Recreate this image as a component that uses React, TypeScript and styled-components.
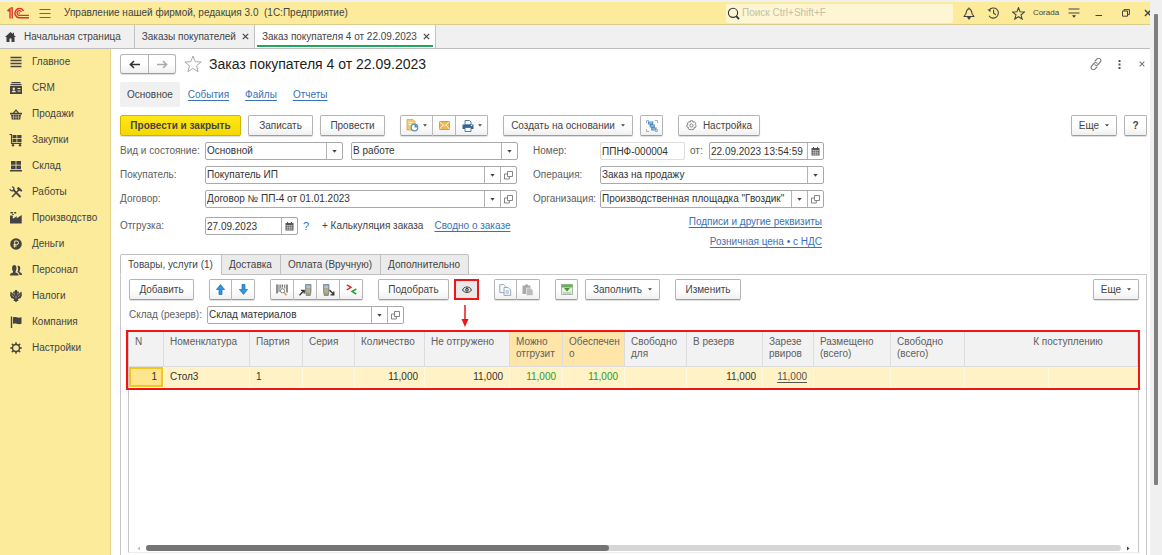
import React from 'react';
import styled, { createGlobalStyle, css } from 'styled-components';

const line = '#b4b4b4';
const ink = '#444444';
const blue = '#3a72b8';
const red = '#f01414';

const GlobalStyle = createGlobalStyle`
  * { box-sizing: border-box; }
  body { margin: 0; background: #ffffff; }
  body, button, input, select, table {
    font-family: 'Liberation Sans', Arial, sans-serif;
    font-size: 10px;
    line-height: 12px;
    color: ${ink};
  }
  button { padding: 0; margin: 0; cursor: pointer; }
  svg { display: block; flex: none; }
`;

/* ---------- page frame ---------- */

const Page = styled.div`
  display: flex;
  min-height: 100vh;
  background: #f0f0f0;
`;
const Window = styled.div`
  flex: 1;
  min-width: 0;
  display: flex;
  flex-direction: column;
  padding-top: 2px;
`;
const PageScroll = styled.div`
  width: 12px;
  flex: none;
  display: flex;
  justify-content: center;
  align-items: flex-start;
  padding: 14px 0 0 0;
  height: 100vh;
`;
const PageThumb = styled.div`
  width: 4px;
  height: 87%;
  background: #808080;
  border-radius: 1px;
`;
const TitleBar = styled.header`
  height: 23px;
  display: flex;
  align-items: center;
  padding-left: 7px;
  background: #fbeb9b;
  border-bottom: 1px solid #d9cc8c;
  overflow: hidden;
`;
const AppName = styled.div`
  flex: 1;
  white-space: pre;
  margin-left: 3px;
`;
const PlainButton = styled.button<{ $w?: number }>`
  width: ${(p) => p.$w ?? 25}px;
  height: 20px;
  flex: none;
  border: 0;
  background: transparent;
  display: flex;
  align-items: center;
  justify-content: center;
`;
const WindowClose = styled(PlainButton)`
  width: 16px;
  margin-right: -6px;
`;
const Search = styled.label`
  width: 227px;
  height: 19px;
  margin-right: 3px;
  padding-left: 1px;
  display: flex;
  align-items: center;
  gap: 2px;
  background: #fef6d3;
  border-radius: 2px;
`;
const SearchInput = styled.input`
  flex: 1;
  min-width: 0;
  border: 0;
  padding: 0;
  background: transparent;
  outline: none;
  &::placeholder { color: #c4bfa6; opacity: 1; }
`;
const UserName = styled.span`
  font-size: 8px;
  width: 30px;
  text-align: center;
`;

const WindowTabs = styled.nav`
  height: 24px;
  display: flex;
  background: #f0f0f0;
  border-bottom: 1px solid #bdbdbd;
`;
const WindowTab = styled.div<{ $active?: boolean; $pad: number }>`
  display: flex;
  align-items: center;
  gap: 6px;
  padding: 0 ${(p) => p.$pad}px 0 7px;
  border-right: 1px solid #c2c2c2;
  background: ${(p) => (p.$active ? '#ffffff' : 'transparent')};
  box-shadow: ${(p) =>
    p.$active ? 'inset 2px 0 #fff, inset -2px 0 #fff, inset 0 -1px #fff, inset 0 -3px #21a65b' : 'none'};
`;
const HomeTab = styled(WindowTab)`
  padding-left: 5px;
`;
const TabLink = styled.a`
  color: ${ink};
  text-decoration: none;
  white-space: nowrap;
  display: flex;
  align-items: center;
  gap: 8px;
`;
const TabClose = styled.button`
  border: 0;
  background: transparent;
  width: 8px;
  height: 12px;
  display: flex;
  align-items: center;
`;

const Body = styled.div`
  flex: 1;
  display: flex;
`;
const Sidebar = styled.nav`
  width: 111px;
  flex: none;
  background: #fbeb9b;
  border-right: 1px solid #e3d48c;
`;
const SideLink = styled.a`
  display: flex;
  align-items: center;
  gap: 9px;
  height: 26px;
  padding-left: 9px;
  color: ${ink};
  text-decoration: none;
`;
const Main = styled.main`
  flex: 1;
  min-width: 0;
  display: flex;
  flex-direction: column;
  background: #ffffff;
  padding: 5px 3px 0 9px;
`;

/* ---------- controls ---------- */

const Row = styled.div<{ $gap?: number }>`
  display: flex;
  align-items: center;
  gap: ${(p) => p.$gap ?? 7}px;
`;
const Spacer = styled.div`
  flex: 1;
`;
const buttonFace = css`
  border: 1px solid ${line};
  border-bottom-color: #9c9c9c;
  background: linear-gradient(#ffffff 50%, #f0f0f0);
`;
const Button = styled.button<{ $primary?: boolean; $w: number }>`
  ${buttonFace}
  height: 21px;
  flex: none;
  display: flex;
  align-items: center;
  justify-content: center;
  gap: 6px;
  width: ${(p) => p.$w}px;
  border-radius: 2px;
  white-space: nowrap;
  box-shadow: 0 1px 1px #dddddd;
  ${(p) =>
    p.$primary &&
    css`
      background: linear-gradient(#ffe818, #f5d800);
      border-color: #cfb300;
      font-weight: bold;
    `}
`;
const IconButton = styled(Button)`
  gap: 4px;
`;
const Group = styled.div`
  display: flex;
  margin-left: 8px;
  & > button { border-radius: 0; }
  & > button:first-child { border-radius: 2px 0 0 2px; }
  & > button:last-child { border-radius: 0 2px 2px 0; }
  & > button:only-child { border-radius: 2px; }
  & > button + button { border-left: 0; }
`;
const EyeButton = styled.button`
  position: relative;
  width: 25px;
  height: 21px;
  display: flex;
  align-items: center;
  justify-content: center;
  border: 2px solid ${red};
  background: #e8e8e8;
  margin-left: -2px;
`;
const Pointer = styled.svg`
  position: absolute;
  top: 23px;
  left: 5px;
`;

const History = styled.div`
  display: flex;
  height: 20px;
  ${buttonFace}
  border-radius: 3px;
  box-shadow: 0 1px 1px #dddddd;
  & > button + button { border-left: 1px solid ${line}; }
  & > button { height: 18px; }
`;
const PageTitle = styled.h1`
  margin: 0;
  font-size: 14px;
  line-height: 18px;
  font-weight: normal;
  color: #1c1c1c;
  flex: 1;
`;
const SectionNav = styled.nav`
  display: flex;
  align-items: center;
  gap: 16px;
  height: 25px;
  margin: 8px 0;
`;
const SectionCurrent = styled.span`
  height: 25px;
  line-height: 25px;
  padding: 0 7px;
  margin-right: -8px;
  background: #f0f0f0;
  border-radius: 2px;
`;
const Link = styled.a`
  color: ${blue};
  text-decoration: underline;
  text-underline-offset: 2px;
  white-space: nowrap;
`;

/* ---------- form ---------- */

const Form = styled.form`
  display: flex;
  gap: 16px;
  margin-top: 6px;
`;
const FormColumn = styled.div<{ $w: number }>`
  width: ${(p) => p.$w}px;
  flex: none;
  display: flex;
  flex-direction: column;
  gap: 6px;
`;
const ShipRow = styled(Row)`
  margin-top: 3px;
`;
const Label = styled.label<{ $w?: number }>`
  width: ${(p) => (p.$w ? p.$w + 'px' : 'auto')};
  flex: none;
  white-space: nowrap;
  color: #606060;
`;
const Box = styled.div<{ $w?: number; $pale?: boolean }>`
  height: 18px;
  display: flex;
  flex: ${(p) => (p.$w ? 'none' : '1')};
  width: ${(p) => (p.$w ? p.$w + 'px' : 'auto')};
  min-width: 0;
  border: 1px solid ${(p) => (p.$pale ? '#dedede' : '#a9a9a9')};
  border-radius: 2px;
  background: #ffffff;
`;
const fieldText = css`
  flex: 1;
  min-width: 0;
  width: 100%;
  height: 16px;
  padding: 0 1px;
  border: 0;
  background: transparent;
  outline: none;
  color: #333333;
`;
const TextInput = styled.input`
  ${fieldText}
`;
const SelectWrap = styled.div`
  position: relative;
  flex: 1;
  min-width: 0;
  display: flex;
`;
const Select = styled.select`
  ${fieldText}
  appearance: none;
  padding-right: 16px;
`;
const Drop = styled.span`
  position: absolute;
  top: 0;
  right: 0;
  width: 16px;
  height: 16px;
  display: flex;
  align-items: center;
  justify-content: center;
  border-left: 1px solid ${line};
  pointer-events: none;
`;
const CellButton = styled.button`
  width: 16px;
  height: 16px;
  flex: none;
  border: 0;
  border-left: 1px solid ${line};
  background: transparent;
  display: flex;
  align-items: center;
  justify-content: center;
`;
const HelpButton = styled.button`
  border: 0;
  background: transparent;
  color: #1d74c8;
  font-size: 11px;
  width: 10px;
`;
const CalcButton = styled.button`
  border: 0;
  background: transparent;
  margin: 0 8px;
`;
const Links = styled.div`
  display: flex;
  flex-direction: column;
  align-items: flex-end;
  gap: 8px;
  margin-top: 2px;
  padding-right: 2px;
`;

/* ---------- goods panel ---------- */

const Tabs = styled.div`
  display: flex;
  margin-top: 6px;
  height: 21px;
  position: relative;
  z-index: 1;
  margin-bottom: -1px;
`;
const Tab = styled.button<{ $active?: boolean }>`
  border: 1px solid #c0c0c0;
  border-left-width: ${(p) => (p.$active ? '1px' : '0')};
  border-bottom-color: ${(p) => (p.$active ? '#ffffff' : '#c0c0c0')};
  background: ${(p) => (p.$active ? '#ffffff' : '#ebebeb')};
  padding: 0 8px 0 7px;
  height: 21px;
  white-space: nowrap;
  &:first-child { border-top-left-radius: 2px; }
  &:last-child { border-top-right-radius: 2px; }
`;
const Panel = styled.section`
  flex: 1;
  display: flex;
  flex-direction: column;
  border: 1px solid #c8c8c8;
  border-bottom: 0;
  padding: 4px 7px 2px;
`;
const PanelRow = styled(Row)`
  padding-left: 1px;
`;
const WarehouseRow = styled.div`
  display: flex;
  align-items: center;
  margin-top: 6px;
  padding-left: 1px;
`;
const TableFrame = styled.div`
  position: relative;
  flex: 1;
  margin-top: 7px;
  border: 1px solid #c8c8c8;
  border-bottom-color: #eeeeee;
  display: flex;
  flex-direction: column;
  justify-content: space-between;
`;
const Highlight = styled.div`
  position: relative;
  &::after {
    content: '';
    position: absolute;
    inset: -2px -2px -3px -3px;
    border: 2px solid ${red};
    pointer-events: none;
  }
`;
const Table = styled.table`
  width: 100%;
  table-layout: fixed;
  border-collapse: separate;
  border-spacing: 0;
`;
const Th = styled.th<{ $hot?: boolean; $center?: boolean; $pad?: number }>`
  height: 35px;
  padding: 4px 0 0 ${(p) => p.$pad ?? 6}px;
  vertical-align: top;
  text-align: ${(p) => (p.$center ? 'center' : 'left')};
  font-weight: normal;
  color: #606060;
  background: ${(p) => (p.$hot ? '#ffe6a8' : '#f2f2f2')};
  border-right: 1px solid #dcdcdc;
  border-bottom: 1px solid #dcdcdc;
  overflow: hidden;
  white-space: pre;
`;
const Td = styled.td<{ $right?: boolean; $green?: boolean; $current?: boolean }>`
  height: 20px;
  padding: 0 6px;
  text-align: ${(p) => (p.$right ? 'right' : 'left')};
  color: ${(p) => (p.$green ? '#2c9a2c' : '#333333')};
  background: ${(p) => (p.$current ? '#ffe58c' : '#fff2c6')};
  border-right: 1px solid #fff9e2;
  box-shadow: ${(p) => (p.$current ? 'inset 0 0 0 2px #f5c521' : 'none')};
`;
const CellLink = styled.a`
  color: #555555;
  text-underline-offset: 2px;
`;
const HScroll = styled.div`
  display: flex;
  align-items: center;
  gap: 5px;
  padding: 0 7px 1px;
`;
const HTrack = styled.div`
  flex: 1;
  height: 6px;
  border-radius: 3px;
  background: #d6d6d6;
`;
const HThumb = styled.div`
  width: 47.5%;
  height: 6px;
  border-radius: 3px;
  background: #757575;
`;

/* ---------- icons ---------- */

const Caret = () => (
  <svg width="5" height="3" viewBox="0 0 5 3">
    <path d="M0.3 0h4.4L2.5 2.8z" fill="#444" />
  </svg>
);
const CaretSmall = () => (
  <svg width="4" height="3" viewBox="0 0 4 3">
    <path d="M0 0.3h4L2 2.6z" fill="#444" />
  </svg>
);
const Cross = ({ size = 7, color = '#444' }: { size?: number; color?: string }) => (
  <svg width={size} height={size} viewBox="0 0 7 7">
    <path d="M0.8 0.8l5.4 5.4M6.2 0.8L0.8 6.2" stroke={color} strokeWidth="1.2" />
  </svg>
);
const OpenIcon = () => (
  <svg width="9" height="9" viewBox="0 0 9 9" fill="none" stroke="#777" strokeWidth="0.9">
    <path d="M3.5 0.5h5v5h-5zM3.3 3H0.5v5h4.8V5.8" />
  </svg>
);
const CalendarIcon = () => (
  <svg width="9" height="9" viewBox="0 0 9 9">
    <path d="M0.5 1h8v7.5h-8z" fill="#555" />
    <path d="M2.5 0v1.5M6.5 0v1.5" stroke="#555" />
    <path d="M1 3.5h7M1 5.3h7M1 7.1h7" stroke="#fff" strokeWidth="0.4" />
    <path d="M2.7 3.2v5M4.5 3.2v5M6.3 3.2v5" stroke="#fff" strokeWidth="0.4" />
  </svg>
);
const Logo = () => (
  <svg width="22" height="12" viewBox="0 0 22 12" fill="none" stroke="#d8352c">
    <path d="M0.4 4L3.4 1.4M3 11.5V3.2L1.6 4.6M5.2 11.5V0.9H3.6" strokeWidth="1.4" />
    <path d="M16.6 4A4.6 4.6 0 1 0 12.1 10.7H22" strokeWidth="1.4" />
    <path d="M14.5 4.8A2.4 2.4 0 1 0 12.1 8.4H22" strokeWidth="1.3" />
    <circle cx="12.2" cy="6" r="0.6" fill="#d8352c" strokeWidth="0.4" />
  </svg>
);
const Burger = () => (
  <svg width="12" height="11" viewBox="0 0 12 11" stroke="#666" strokeWidth="1.2">
    <path d="M0.5 1.5h11M0.5 5.5h11M0.5 9.5h11" />
  </svg>
);
const SearchIcon = () => (
  <svg width="13" height="13" viewBox="0 0 13 13" fill="none" stroke="#333">
    <circle cx="6" cy="5.8" r="4.6" strokeWidth="1.1" />
    <path d="M9.3 9.2l2.7 2.9" strokeWidth="1.8" />
  </svg>
);
const Bell = () => (
  <svg width="12" height="13" viewBox="0 0 12 13" fill="none" stroke="#444" strokeWidth="1.1">
    <path d="M1 9.5h10L9.4 7.3C8.6 6 9 2 6 1.8 3 2 3.4 6 2.6 7.3z" strokeLinejoin="round" />
    <path d="M4.8 10.3h2.4L6 12z" fill="#444" />
    <path d="M6 0.6v1.2" />
  </svg>
);
const ClockBack = () => (
  <svg width="13" height="12" viewBox="0 0 13 12" fill="none" stroke="#444" strokeWidth="1.1">
    <path d="M2 3.3A5.1 5.1 0 1 1 2 8.8M6.6 2.8v3.5l2.3 1.5" />
    <path d="M0.3 2.5h3.2v2.8z" fill="#444" stroke="none" />
  </svg>
);
const Star = ({ size, color, weight = 1 }: { size: number; color: string; weight?: number }) => (
  <svg width={size} height={size} viewBox="0 0 18 18" fill="none" stroke={color} strokeWidth={weight}>
    <path d="M9 1l2.2 5.7 6 .3-4.7 3.8 1.6 5.9L9 13.4l-5.100 3.300 1.600-5.900L0.800 7l6-.3z" />
  </svg>
);
const MenuLines = () => (
  <svg width="12" height="10" viewBox="0 0 12 10">
    <path d="M0.5 1h11M0.5 5h11" stroke="#444" strokeWidth="1.1" />
    <path d="M4 7.2h4L6 9.8z" fill="#333" />
  </svg>
);
const Restore = () => (
  <svg width="8" height="8" viewBox="0 0 8 8" fill="none" stroke="#444">
    <path d="M0.5 2h5v5.2h-5zM2 2V0.6h5.4v5H5.5" />
  </svg>
);
const Minimize = () => (
  <svg width="8" height="8" viewBox="0 0 8 8" stroke="#444">
    <path d="M0.500 6.500h6.500" />
  </svg>
);
const Home = () => (
  <svg width="11" height="10" viewBox="0 0 11 10" fill="#3c3c3c">
    <path d="M5.5 0L0 5h1.5v5h3V6.5h2V10h3V5H11L9 3.2V0.8H7.8v1.3z" />
  </svg>
);
const Arrow = ({ color, flip }: { color: string; flip?: boolean }) => (
  <svg width="11" height="9" viewBox="0 0 11 9" fill="none" stroke={color} strokeWidth="1.600">
    <path d={flip ? 'M0 4.5h9.5M6 1l3.6 3.5L6 8' : 'M11 4.5H1.5M5 1L1.4 4.5 5 8'} />
  </svg>
);
const ChainLink = () => (
  <svg width="12" height="12" viewBox="0 0 12 12" fill="none" stroke="#777" strokeWidth="1.1" strokeLinecap="round">
    <path d="M5 3l1.700-1.700a2.200 2.200 0 0 1 3.800 2.400L8 6.600a2.200 2.200 0 0 1-3 .3" />
    <path d="M7 9l-1.700 1.700a2.200 2.200 0 0 1-3.800-2.400L4 5.400a2.200 2.200 0 0 1 3-.3" />
  </svg>
);
const Dots = () => (
  <svg width="3" height="9" viewBox="0 0 3 9" fill="#555">
    <path d="M0.5 0h2v2h-2zM0.5 3.5h2v2h-2zM0.5 7h2v2h-2z" />
  </svg>
);

const SettingsIcon = () => (
  <svg width="11" height="11" viewBox="0 0 14 14" fill="none" stroke="#666">
    <path d="M5.600 1h2.800l.5 1.800 1.800-.6 1.700 2-1 1.500 1.600 1.300-1 2.500-1.700.2-.1 1.900-2.400 1-1-1.200-1.600 1.200-2.300-1.400.2-1.700-1.800-.6-.3-2.500 1.500-1-.6-1.700 1.900-1.700 1.500.7z" />
    <circle cx="7" cy="7" r="2" />
  </svg>
);

const sideIcons: Record<string, React.ReactNode> = {
  main: <path d="M1.500 2.500h11M1.500 5.500h11M1.500 8.500h11M1.500 11.500h11" stroke="#444" strokeWidth="1.400" />,
  crm: (
    <>
      <path d="M2.500 1h9v1.200h-9zM1.500 3h11v1.200h-11zM1 5h12v8H1z" />
      <circle cx="4.800" cy="7.700" r="1.200" fill="#fbeb9b" />
      <path d="M2.800 11.300c0-2.500 4-2.500 4 0zM8.500 7h3v1h-3zM8.500 9.500h3v1h-3z" fill="#fbeb9b" />
    </>
  ),
  sales: (
    <>
      <path d="M4.500 6L7 3.200 9.500 6" fill="none" stroke="#444" strokeWidth="1.200" />
      <path d="M1 5.800h12v1.700H1zM2 8h10l-.8 4.500H2.800z" />
      <path d="M4.500 8v4M7 8v4M9.500 8v4" stroke="#fbeb9b" strokeWidth="0.500" />
      <path d="M2.500 10.200h9" stroke="#fbeb9b" strokeWidth="0.400" />
    </>
  ),
  buy: (
    <>
      <path d="M0.500 1.500h2v9h10" fill="none" stroke="#444" strokeWidth="1.100" />
      <path d="M3.500 2h4v3.300h-4zM8.300 2h4.200v3.300H8.300zM3.500 6h4v3.300h-4zM8.300 6h4.200v3.300H8.300z" />
      <circle cx="4" cy="12.200" r="1.200" />
      <circle cx="11" cy="12.200" r="1.200" />
    </>
  ),
  stock: <path d="M2 2h4.600v3.800H2zM7.400 2H12v3.800H7.400zM2 6.500h4.600v3.800H2zM7.400 6.500H12v3.800H7.400zM1 11h12v1.500H1z" />,
  work: (
    <>
      <path d="M4 4.500l7.500 7.500" fill="none" stroke="#444" strokeWidth="1.800" />
      <path d="M9.800 5L3 12" fill="none" stroke="#444" strokeWidth="1.500" />
      <path d="M3 1.800a2 2 0 1 1-2 2.200" fill="none" stroke="#444" strokeWidth="1.300" />
      <path d="M7.800 3l2-1 3.400 3.300-.8 1.800-1.500-1.300-1.300.3z" />
    </>
  ),
  factory: <path d="M1.500 1h2.600v1.500H1.500zM5.200 1h2v1.500h-2zM1 12.500V4.500h2.800v3.300l4-2.600v2L12.700 4v8.500zM3 3.200h2v.8H3z" />,
  money: (
    <>
      <circle cx="7" cy="7" r="5.800" />
      <path d="M5.700 10.500V4h2a1.700 1.700 0 0 1 0 3.600H4.500M4.500 9h3.200" fill="none" stroke="#fbeb9b" strokeWidth="1" />
    </>
  ),
  staff: (
    <>
      <path d="M1 12.500c0-2 1-2.400 3-3V8.200C2.600 6.500 2.600 2 5.300 2s2.700 4.500 1.300 6.200v1.300c2 .6 3 1 3 3z" />
      <path d="M8.500 3c3-1 3.400 3.200 2 5v1c1.500.5 2.500 1 2.500 3h-2.500c0-1.500-.8-2.400-2.200-3 1-1.500 1.200-4 .2-6z" />
    </>
  ),
  tax: (
    <>
      <path d="M6 1h2v1.500h1.800v2L8 4.800l.5 1L12.500 2.500l.4 4-1.400 2.700-2 .5-.7 1 1 1.300H8.200L7 13.300 5.800 12H4.200l1-1.300-.7-1-2-.5L1.100 6.500l.4-4 4 3.300.5-1-1.800-.3v-2H6z" />
      <path d="M2.800 5.500l2 2.500M11.200 5.500l-2 2.500M7 6.500v3" stroke="#fbeb9b" strokeWidth="0.500" />
    </>
  ),
  company: (
    <>
      <path d="M2.500 1.500v11.500" stroke="#444" strokeWidth="1.400" />
      <path d="M4 2.500c2.500-1.500 4 1.200 8.500-.2v6.500c-4 1.400-6-1.300-8.500.2z" />
    </>
  ),
  settings: (
    <g fill="none" stroke="#444" strokeWidth="1.500">
      <circle cx="7" cy="7" r="3.500" />
      <path d="M7 1.200v2.300M7 10.500v2.300M1.200 7h2.300M10.500 7h2.300M2.900 2.900l1.600 1.600M9.500 9.500l1.600 1.600M11.100 2.900L9.500 4.500M4.500 9.500l-1.600 1.600" />
    </g>
  ),
};

const SideIcon = ({ name }: { name: string }) => (
  <svg width="14" height="14" viewBox="0 0 14 14" fill="#444">
    {sideIcons[name]}
  </svg>
);

const ReportIcon = () => (
  <svg width="13" height="13" viewBox="0 0 13 13">
    <path d="M1 0.500h6l2 2V11H1z" fill="#f0cb74" stroke="#d3a748" strokeWidth="0.800" />
    <path d="M2.500 3.500h4M2.500 5.500h3" stroke="#fff4cc" />
    <circle cx="8.500" cy="8.500" r="3.300" fill="#fff" stroke="#5f8db8" strokeWidth="1.200" />
    <path d="M8.500 8.500V5.800a2.700 2.700 0 0 1 2.700 2.700z" fill="#5f8db8" />
  </svg>
);
const MailIcon = () => (
  <svg width="11" height="9" viewBox="0 0 11 9">
    <path d="M0.500 0.500h10v8H0.500z" fill="#f3b64e" stroke="#cd8f2b" strokeWidth="0.800" />
    <path d="M0.500 0.800L5.500 5l5-4.200M0.500 8.200L4 4M10.500 8.200L7 4" fill="none" stroke="#fff" strokeWidth="0.800" />
  </svg>
);
const PrintIcon = () => (
  <svg width="12" height="12" viewBox="0 0 12 12">
    <path d="M3 0.500h4.500L9 2v3H3z" fill="#fff" stroke="#456f96" strokeWidth="0.900" />
    <path d="M0.500 4.500h11V9h-11z" fill="#34648f" />
    <path d="M3 7.500h6v4H3z" fill="#fff" stroke="#456f96" strokeWidth="0.900" />
    <path d="M8.800 5.700h1.500" stroke="#fff" />
  </svg>
);
const StructureIcon = () => (
  <svg width="12" height="12" viewBox="0 0 12 12">
    <path d="M3 .5H.5V3M.5 9v2.500H3M9 .5h2.500V3M11.500 9v2.500H9" fill="none" stroke="#8fb3d1" />
    <path d="M2 1.500h5.200v3H2zM3.600 4.500h5.200v3H3.600zM5.200 7.500h5.300v3H5.200z" fill="#4d88b8" />
    <path d="M3 3h3.200M4.600 6h3.200M6.200 9h3.300" stroke="#d5e6f3" strokeWidth="0.900" />
  </svg>
);
const MoveArrow = ({ down }: { down?: boolean }) => (
  <svg width="9" height="11" viewBox="0 0 9 11">
    <path
      d={down ? 'M3 0.5h3v5h2.600L4.500 10.400 0.400 5.500H3z' : 'M3 10.500h3v-5h2.600L4.500 0.600 0.400 5.500H3z'}
      fill="#2f96e0"
      stroke="#1a6fb5"
      strokeWidth="0.700"
    />
  </svg>
);
const BarcodeIcon = () => (
  <svg width="12" height="12" viewBox="0 0 12 12" fill="none">
    <path d="M1 0.500v9M11 0.500v8" stroke="#555" strokeWidth="1.300" />
    <path d="M3 0.500v7.500M4.800 0.500v4M6.600 0.500v3M8.800 0.500v4" stroke="#666" strokeWidth="1" />
    <circle cx="6.500" cy="6.800" r="2.100" fill="#fff" stroke="#777" strokeWidth="0.900" />
    <path d="M8 8.500l2.500 2.800" stroke="#d39a64" strokeWidth="1.500" />
  </svg>
);
const TerminalIcon = ({ out }: { out?: boolean }) => (
  <svg width="13" height="12" viewBox="0 0 13 12">
    <g transform={out ? 'translate(1 0)' : 'translate(6 0)'}>
      <path d="M0.500 0.500h5.500v6.500l-.7 4.500H1.200L0.500 7z" fill="#9a9a9a" stroke="#777" strokeWidth="0.700" />
      <path d="M1.300 1.500h3.900v2.800H1.300z" fill="#8fd0ee" />
      <path d="M1.400 6h3.700M1.600 8h3.300" stroke="#e6c44a" />
    </g>
    {out ? (
      <path d="M7.500 6l4 4.300M11.800 7.500v3.300H8.500" fill="none" stroke="#333" strokeWidth="1.300" />
    ) : (
      <path d="M0.500 11.300L5 6.500M2 6.300h3.200v3.200" fill="none" stroke="#333" strokeWidth="1.300" />
    )}
  </svg>
);
const SwapIcon = () => (
  <svg width="11" height="11" viewBox="0 0 11 11" fill="none" strokeWidth="1.500">
    <path d="M0.800 0.800L5 3.300 0.800 5.800" stroke="#e02d2d" />
    <path d="M10.300 5L6 7.500l4.300 2.500" stroke="#2ba23c" />
  </svg>
);
const EyeIcon = () => (
  <svg width="10" height="9" viewBox="0 0 10 9" fill="none" stroke="#333">
    <path d="M0.600 5C1.500 1 8.500 1 9.400 5 8 8.200 2 8.200 0.600 5z" strokeWidth="1" />
    <circle cx="5" cy="4.800" r="1.400" strokeWidth="1" />
    <circle cx="5" cy="4.800" r="0.500" fill="#333" stroke="none" />
  </svg>
);
const CopyIcon = () => (
  <svg width="13" height="12" viewBox="0 0 13 12" fill="#f7fafc" stroke="#8aa0b4" strokeWidth="0.900">
    <path d="M0.800 0.600h4l2 2v6h-6z" />
    <path d="M5 3.500h4.200l2.500 2.500v5.400H5z" />
    <path d="M6.500 7h3.500M6.500 9h3.500" />
  </svg>
);
const PasteIcon = () => (
  <svg width="12" height="12" viewBox="0 0 12 12" fill="#a9a9a9">
    <path d="M0.500 1.500H3V0.500h3v1h2.500V10h-8z" />
    <path d="M4.500 4h4l2.500 2.500v5H4.500z" fill="#bcbcbc" stroke="#f4f4f4" strokeWidth="0.600" />
  </svg>
);
const FillIcon = () => (
  <svg width="12" height="11" viewBox="0 0 12 11">
    <path d="M0.500 0.500h11v10H0.500z" fill="#e8f0e4" stroke="#98a892" strokeWidth="0.800" />
    <path d="M0.500 0.500h11V3.500H0.500z" fill="#6fae60" />
    <path d="M3 4h6L6 7.500z" fill="#3f9a2d" />
    <path d="M2 9h8" stroke="#a9b8a4" />
  </svg>
);

/* ---------- composed fields ---------- */

const Combo = ({ id, value, open, w, label }: { id: string; value: string; open?: boolean; w?: number; label?: string }) => (
  <Box $w={w}>
    <SelectWrap>
      <Select id={id} aria-label={label} defaultValue={value}>
        <option>{value}</option>
      </Select>
      <Drop>
        <Caret />
      </Drop>
    </SelectWrap>
    {open && (
      <CellButton type="button" aria-label="Открыть">
        <OpenIcon />
      </CellButton>
    )}
  </Box>
);
const DateField = ({ id, value, w }: { id: string; value: string; w?: number }) => (
  <Box $w={w}>
    <TextInput id={id} defaultValue={value} />
    <CellButton type="button" aria-label="Выбрать дату">
      <CalendarIcon />
    </CellButton>
  </Box>
);

const sections: [string, string][] = [
  ['main', 'Главное'],
  ['crm', 'CRM'],
  ['sales', 'Продажи'],
  ['buy', 'Закупки'],
  ['stock', 'Склад'],
  ['work', 'Работы'],
  ['factory', 'Производство'],
  ['money', 'Деньги'],
  ['staff', 'Персонал'],
  ['tax', 'Налоги'],
  ['company', 'Компания'],
  ['settings', 'Настройки'],
];

const columns = [35, 86, 53, 52, 70, 85, 53, 62, 62, 76, 51, 77, 74, 84];

export default function App() {
  return (
    <>
      <GlobalStyle />
      <Page>
        <Window>
          <TitleBar>
            <Logo />
            <PlainButton aria-label="Меню" $w={32}>
              <Burger />
            </PlainButton>
            <AppName>{'Управление нашей фирмой, редакция 3.0  (1С:Предприятие)'}</AppName>
            <Search>
              <SearchIcon />
              <SearchInput aria-label="Поиск" placeholder="Поиск Ctrl+Shift+F" />
            </Search>
            <PlainButton aria-label="Уведомления"><Bell /></PlainButton>
            <PlainButton aria-label="История"><ClockBack /></PlainButton>
            <PlainButton aria-label="Избранное"><Star size={13} color="#444" weight={1.5} /></PlainButton>
            <UserName>Corada</UserName>
            <PlainButton aria-label="Сервис"><MenuLines /></PlainButton>
            <PlainButton aria-label="Свернуть" $w={26}><Minimize /></PlainButton>
            <PlainButton aria-label="Развернуть" $w={28}><Restore /></PlainButton>
            <WindowClose aria-label="Закрыть"><Cross size={8} /></WindowClose>
          </TitleBar>

          <WindowTabs>
            <HomeTab $pad={13}>
              <TabLink href="#home"><Home /> Начальная страница</TabLink>
            </HomeTab>
            <WindowTab $pad={4}>
              <TabLink href="#orders">Заказы покупателей</TabLink>
              <TabClose aria-label="Закрыть вкладку"><Cross /></TabClose>
            </WindowTab>
            <WindowTab $active $pad={4}>
              <TabLink href="#order">Заказ покупателя 4 от 22.09.2023</TabLink>
              <TabClose aria-label="Закрыть вкладку"><Cross /></TabClose>
            </WindowTab>
          </WindowTabs>

          <Body>
            <Sidebar>
              {sections.map(([icon, name]) => (
                <SideLink key={icon} href={'#' + icon}>
                  <SideIcon name={icon} />
                  {name}
                </SideLink>
              ))}
            </Sidebar>

            <Main>
              <Row $gap={0}>
                <History>
                  <PlainButton aria-label="Назад" $w={27}><Arrow color="#333" /></PlainButton>
                  <PlainButton aria-label="Вперед" $w={27}><Arrow color="#aaa" flip /></PlainButton>
                </History>
                <PlainButton aria-label="В избранное" $w={33}><Star size={18} color="#a8a8a8" /></PlainButton>
                <PageTitle>Заказ покупателя 4 от 22.09.2023</PageTitle>
                <PlainButton aria-label="Ссылка" $w={12}><ChainLink /></PlainButton>
                <PlainButton aria-label="Еще действия" $w={34}><Dots /></PlainButton>
                <PlainButton aria-label="Закрыть" $w={11}><Cross size={6} color="#777" /></PlainButton>
              </Row>

              <SectionNav>
                <SectionCurrent>Основное</SectionCurrent>
                <Link href="#events">События</Link>
                <Link href="#files">Файлы</Link>
                <Link href="#reports">Отчеты</Link>
              </SectionNav>

              <Row>
                <Button $primary $w={121}>Провести и закрыть</Button>
                <Button $w={65}>Записать</Button>
                <Button $w={65}>Провести</Button>
                <Group>
                  <IconButton $w={33} aria-label="Отчеты"><ReportIcon /><CaretSmall /></IconButton>
                  <IconButton $w={23} aria-label="Отправить"><MailIcon /></IconButton>
                  <IconButton $w={32} aria-label="Печать"><PrintIcon /><CaretSmall /></IconButton>
                </Group>
                <Group>
                  <Button $w={130}>Создать на основании <CaretSmall /></Button>
                </Group>
                <Button $w={23} aria-label="Структура подчиненности"><StructureIcon /></Button>
                <Group>
                  <Button $w={82}><SettingsIcon />Настройка</Button>
                </Group>
                <Spacer />
                <Button $w={46}>Еще <CaretSmall /></Button>
                <Button $w={23}><b>?</b></Button>
              </Row>

              <Form>
                <FormColumn $w={397}>
                  <Row $gap={0}>
                    <Label $w={85} htmlFor="kind">Вид и состояние:</Label>
                    <Row $gap={8}>
                      <Combo id="kind" value="Основной" w={138} />
                      <Combo id="state" label="Состояние" value="В работе" w={167} />
                    </Row>
                  </Row>
                  <Row $gap={0}>
                    <Label $w={85} htmlFor="buyer">Покупатель:</Label>
                    <Combo id="buyer" value="Покупатель ИП" open />
                  </Row>
                  <Row $gap={0}>
                    <Label $w={85} htmlFor="contract">Договор:</Label>
                    <Combo id="contract" value="Договор № ПП-4 от 01.01.2023" open />
                  </Row>
                  <ShipRow $gap={0}>
                    <Label $w={85} htmlFor="ship">Отгрузка:</Label>
                    <Row $gap={3}>
                      <DateField id="ship" value="27.09.2023" w={93} />
                      <HelpButton type="button">?</HelpButton>
                      <CalcButton type="button">+ Калькуляция заказа</CalcButton>
                      <Link href="#summary">Сводно о заказе</Link>
                    </Row>
                  </ShipRow>
                </FormColumn>
                <FormColumn $w={291}>
                  <Row $gap={0}>
                    <Label $w={67} htmlFor="number">Номер:</Label>
                    <Row $gap={5}>
                      <Box $w={85} $pale><TextInput id="number" readOnly value="ППНФ-000004" /></Box>
                      <Label htmlFor="date" $w={14}>от:</Label>
                      <DateField id="date" value="22.09.2023 13:54:59" w={115} />
                    </Row>
                  </Row>
                  <Row $gap={0}>
                    <Label $w={67} htmlFor="operation">Операция:</Label>
                    <Combo id="operation" value="Заказ на продажу" />
                  </Row>
                  <Row $gap={0}>
                    <Label $w={67} htmlFor="org">Организация:</Label>
                    <Combo id="org" value={'Производственная площадка "Гвоздик"'} open />
                  </Row>
                  <Links>
                    <Link href="#signs">Подписи и другие реквизиты</Link>
                    <Link href="#price">Розничная цена • с НДС</Link>
                  </Links>
                </FormColumn>
              </Form>

              <Tabs role="tablist">
                <Tab role="tab" $active>Товары, услуги (1)</Tab>
                <Tab role="tab">Доставка</Tab>
                <Tab role="tab">Оплата (Вручную)</Tab>
                <Tab role="tab">Дополнительно</Tab>
              </Tabs>
              <Panel>
                <PanelRow>
                  <Button $w={65}>Добавить</Button>
                  <Group>
                    <Button $w={23} aria-label="Вверх"><MoveArrow /></Button>
                    <Button $w={23} aria-label="Вниз"><MoveArrow down /></Button>
                  </Group>
                  <Group>
                    <Button $w={24} aria-label="Штрихкод"><BarcodeIcon /></Button>
                    <Button $w={23} aria-label="Выгрузить в терминал"><TerminalIcon /></Button>
                    <Button $w={23} aria-label="Загрузить из терминала"><TerminalIcon out /></Button>
                    <Button $w={23} aria-label="Сравнить"><SwapIcon /></Button>
                  </Group>
                  <Group>
                    <Button $w={71}>Подобрать</Button>
                  </Group>
                  <EyeButton aria-label="Показать резервы">
                    <EyeIcon />
                    <Pointer width="8" height="24" viewBox="0 0 8 24">
                      <path d="M4 1v15" stroke={red} strokeWidth="1.5" />
                      <path d="M0.500 15h7L4 23z" fill={red} />
                    </Pointer>
                  </EyeButton>
                  <Group>
                    <Button $w={23} aria-label="Копировать"><CopyIcon /></Button>
                    <Button $w={23} aria-label="Вставить"><PasteIcon /></Button>
                  </Group>
                  <Group>
                    <Button $w={23} aria-label="Заполнить остатками"><FillIcon /></Button>
                  </Group>
                  <Button $w={75}>Заполнить <CaretSmall /></Button>
                  <Group>
                    <Button $w={66}>Изменить</Button>
                  </Group>
                  <Spacer />
                  <Button $w={46}>Еще <CaretSmall /></Button>
                </PanelRow>
                <WarehouseRow>
                  <Label $w={78} htmlFor="warehouse">Склад (резерв):</Label>
                  <Combo id="warehouse" value="Склад материалов" open w={197} />
                </WarehouseRow>

                <TableFrame>
                  <Highlight>
                    <Table>
                      <colgroup>
                        {columns.map((w, i) => <col key={i} width={w} />)}
                        <col />
                      </colgroup>
                      <thead>
                        <tr>
                          <Th>N</Th>
                          <Th>Номенклатура</Th>
                          <Th>Партия</Th>
                          <Th>Серия</Th>
                          <Th>Количество</Th>
                          <Th>Не отгружено</Th>
                          <Th $hot>{'Можно\nотгрузит'}</Th>
                          <Th $hot>{'Обеспечен\nо'}</Th>
                          <Th>{'Свободно\nдля'}</Th>
                          <Th>В резерв</Th>
                          <Th>{'Зарезе\nрвиров'}</Th>
                          <Th>{'Размещено\n(всего)'}</Th>
                          <Th>{'Свободно\n(всего)'}</Th>
                          <Th colSpan={2} $center $pad={34}>К поступлению</Th>
                        </tr>
                      </thead>
                      <tbody>
                        <tr>
                          <Td $right $current>1</Td>
                          <Td>Стол3</Td>
                          <Td>1</Td>
                          <Td />
                          <Td $right>11,000</Td>
                          <Td $right>11,000</Td>
                          <Td $right $green>11,000</Td>
                          <Td $right $green>11,000</Td>
                          <Td />
                          <Td $right>11,000</Td>
                          <Td $right><CellLink href="#reserve">11,000</CellLink></Td>
                          <Td />
                          <Td />
                          <Td />
                          <Td />
                        </tr>
                      </tbody>
                    </Table>
                  </Highlight>
                  <HScroll>
                    <svg width="5" height="5" viewBox="0 0 5 5"><path d="M4 0.500v4L1.500 2.500z" fill="#bbb" /></svg>
                    <HTrack><HThumb /></HTrack>
                    <svg width="5" height="5" viewBox="0 0 5 5"><path d="M1 0.500v4L3.500 2.500z" fill="#444" /></svg>
                  </HScroll>
                </TableFrame>
              </Panel>
            </Main>
          </Body>
        </Window>
        <PageScroll>
          <PageThumb />
        </PageScroll>
      </Page>
    </>
  );
}
